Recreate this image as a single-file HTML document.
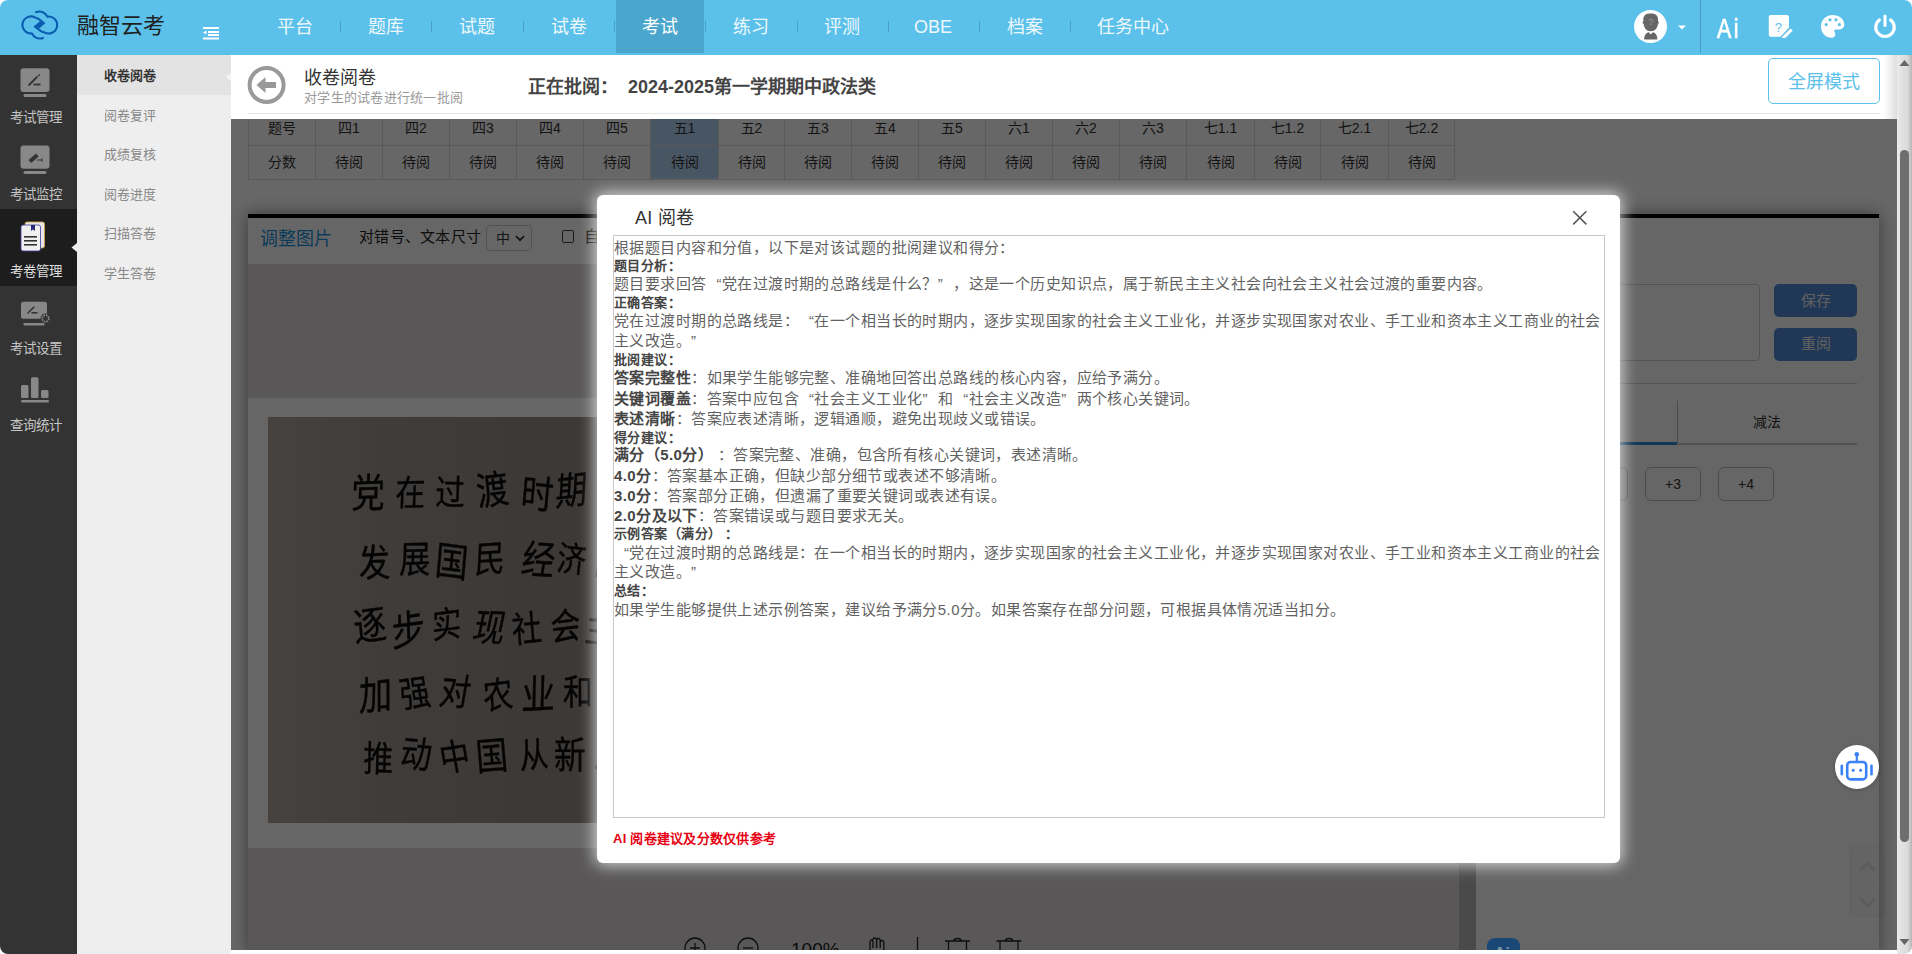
<!DOCTYPE html>
<html lang="zh-CN"><head><meta charset="utf-8">
<style>
*{box-sizing:border-box;margin:0;padding:0}
html,body{width:1912px;height:954px;overflow:hidden;background:#fff;font-family:"Liberation Sans",sans-serif}
.a{position:absolute}
#hdr{left:0;top:0;width:1912px;height:55px;background:#5bc1ea;border-top-left-radius:8px;border-top-right-radius:8px}
.nav{position:absolute;top:0;height:53px;line-height:54px;font-size:18px;color:#eef8fc;text-align:center;width:90px}
.sep{position:absolute;top:21px;width:1px;height:11px;background:#4a9fc6}
#side{left:0;top:55px;width:77px;height:899px;background:#333;border-bottom-left-radius:8px}
.si{position:absolute;left:-3px;width:77px;text-align:center;font-size:13.5px;color:#c4c4c4;margin-top:1px}
#sub{left:77px;top:55px;width:154px;height:899px;background:#eee}
.sub{position:absolute;left:27px;font-size:13px;color:#888;line-height:16px;margin-top:0.5px}
#overlay{left:231px;top:119px;width:1666px;height:831px;background:rgba(0,0,0,0.595)}
.td{position:absolute;border:1px solid #ddd;text-align:center;font-size:14px;line-height:33px;color:#333}
.hw{position:absolute;font-size:31px;line-height:40px;width:36px;text-align:center;color:#0a0a0a;white-space:nowrap;-webkit-text-stroke:0.3px #0a0a0a}
.md p{position:absolute;left:0;white-space:nowrap;font-size:15px;line-height:20px;color:#626262;letter-spacing:0.42px}
.md p.h{font-size:13px;line-height:19px;font-weight:bold;color:#444}
.md p b{color:#454545}
.md i{font-style:normal;display:inline-block;width:15.4px}
.md i.ql{text-align:right}
.md i.qr{text-align:left}
</style></head><body>
<div id="hdr" class="a">
 <svg class="a" style="left:0;top:0" width="80" height="55" viewBox="0 0 80 55">
  <g fill="none" stroke="#0a5cb0" stroke-width="2.1" stroke-linecap="round" stroke-linejoin="round">
   <path d="M36,12.2 C40.5,10.4 45.6,12.4 47.3,16.6 A8.5,8.5 0 1 1 44.3,32.3 C43,32.2 42,31.8 40.6,30.8 L35,26.6"/>
   <path d="M43,37.9 C38.5,39.6 33.6,37.6 31.9,33.4 A8.5,8.5 0 1 1 35.4,17.7 C36.7,17.8 37.8,18.3 39.2,19.3 L44,23.4"/>
  </g>
  <path d="M45.2,23.1 L39.4,21.6 L33.6,26.8 L39.6,28.2 Z" fill="#0a5cb0"/>
 </svg>
 <div class="a" style="left:77px;top:11px;font-size:22px;line-height:30px;color:#1f1f1f;letter-spacing:0px">融智云考</div>
 <svg class="a" style="left:203px;top:27px" width="16" height="13" viewBox="0 0 16 13">
  <rect x="0" y="0" width="16" height="2" fill="#fff"/>
  <rect x="5" y="4" width="11" height="2" fill="#fff"/>
  <rect x="5" y="7" width="11" height="2" fill="#fff"/>
  <rect x="0" y="10.5" width="16" height="2" fill="#fff"/>
  <path d="M0,5.5 L3.5,3.5 L3.5,7.5 Z" fill="#fff"/>
 </svg>
 <div class="a" style="left:616px;top:0;width:88px;height:53px;background:#4aa6cd"></div>
 <div class="nav" style="left:250px">平台</div>
 <div class="nav" style="left:341px">题库</div>
 <div class="nav" style="left:432px">试题</div>
 <div class="nav" style="left:524px">试卷</div>
 <div class="nav" style="left:615px;color:#fff">考试</div>
 <div class="nav" style="left:706px">练习</div>
 <div class="nav" style="left:797px">评测</div>
 <div class="nav" style="left:888px">OBE</div>
 <div class="nav" style="left:980px">档案</div>
 <div class="nav" style="left:1078px;width:110px">任务中心</div>
 <div class="sep" style="left:340px"></div>
 <div class="sep" style="left:431px"></div>
 <div class="sep" style="left:523px"></div>
 <div class="sep" style="left:614px"></div>
 <div class="sep" style="left:705px"></div>
 <div class="sep" style="left:797px"></div>
 <div class="sep" style="left:888px"></div>
 <div class="sep" style="left:979px"></div>
 <div class="sep" style="left:1070px"></div>
 <!-- avatar -->
 <div class="a" style="left:1634px;top:10px;width:33px;height:33px;border-radius:50%;background:#fff;overflow:hidden">
  <svg width="33" height="33" viewBox="0 0 33 33">
   <path d="M9.4,11 C8.8,5 12.2,3.6 16.6,3.6 C21,3.6 24.6,5 24,11 C25.2,11.6 25,13.8 23.9,14 C23.4,18.6 20.8,21.2 16.8,21.2 C12.6,21.2 10.2,18.6 9.7,14 C8.4,13.8 8.2,11.6 9.4,11 Z" fill="#666"/>
   <path d="M10.2,29.6 C10.2,25.2 12.2,22.8 14.8,22.3 L16.8,24.6 L18.8,22.3 C21.4,22.8 23.4,25.2 23.4,29.6 Z" fill="#666"/>
   <text x="16.8" y="14.5" font-size="9" fill="#9a9a9a" text-anchor="middle" font-family="Liberation Sans">?</text>
  </svg>
 </div>
 <svg class="a" style="left:1678px;top:25px" width="8" height="5" viewBox="0 0 8 5"><path d="M0,0.5 L8,0.5 L4,4.6 Z" fill="#fff"/></svg>
 <div class="a" style="left:1700px;top:0;width:1px;height:53px;background:#4a9cc2"></div>
 <div class="a" style="left:1717px;top:11.5px;font-size:27.5px;line-height:34px;color:#fff;-webkit-text-stroke:0.7px #fff;letter-spacing:3px;transform:scaleX(0.78);transform-origin:0 0">Ai</div>
 <svg class="a" style="left:1767px;top:13px" width="26" height="26" viewBox="0 0 26 26">
  <path d="M3.5,2 L20,2 Q22,2 22,4 L22,14.5 L13.5,23.8 L3.5,23.8 Q1.8,23.8 1.8,22 L1.8,3.7 Q1.8,2 3.5,2 Z" fill="#fff"/>
  <path d="M15.2,23.8 L23.6,15.4 L25.8,17.6 L18.4,25 L15.2,25 Z" fill="#fff"/>
  <text x="11.3" y="18.5" font-size="13" fill="#5bc1ea" text-anchor="middle" font-family="Liberation Sans">?</text>
 </svg>
 <svg class="a" style="left:1820px;top:14px" width="26" height="25" viewBox="0 0 26 25">
  <path d="M12.5,1 C19,1 24.3,5 24.3,10.5 C24.3,14 21.5,15.6 18.5,15.6 L15.8,15.6 C14.6,15.6 13.8,16.6 14.2,17.6 C14.6,18.4 15.3,19.2 15.3,20.6 C15.3,22.6 13.8,23.8 11.8,23.8 C5.6,23.6 1,19 1,12.4 C1,6 6,1 12.5,1 Z" fill="#fff"/>
  <circle cx="6.2" cy="10.6" r="1.6" fill="#5bc1ea"/>
  <circle cx="10" cy="5.8" r="1.6" fill="#5bc1ea"/>
  <circle cx="16" cy="5.8" r="1.6" fill="#5bc1ea"/>
  <circle cx="19.4" cy="10.6" r="1.6" fill="#5bc1ea"/>
 </svg>
 <svg class="a" style="left:1873px;top:14px" width="24" height="25" viewBox="0 0 24 25">
  <path d="M6.4,6 A9.2,9.2 0 1 0 17.6,6" fill="none" stroke="#fff" stroke-width="3.2" stroke-linecap="round"/>
  <path d="M12,2 L12,11.5" stroke="#fff" stroke-width="3" stroke-linecap="round"/>
 </svg>
</div>
<div id="side" class="a">
 <div class="a" style="left:0;top:154px;width:77px;height:77px;background:#1d1d1d"></div>
 <svg class="a" style="left:0;top:0" width="77" height="400" viewBox="0 55 77 400">
  <!-- icon1 -->
  <rect x="20.5" y="68.3" width="29" height="23.7" rx="3" fill="#888"/>
  <rect x="23.5" y="94" width="23" height="3" rx="1.5" fill="#888"/>
  <path d="M29,85 L37,77" stroke="#333" stroke-width="1.8" stroke-linecap="round"/>
  <rect x="33.5" y="83.6" width="7" height="1.8" fill="#333"/>
  <circle cx="39" cy="75.3" r="1" fill="#333"/>
  <!-- icon2 -->
  <rect x="20.5" y="145.6" width="29" height="23.1" rx="3" fill="#888"/>
  <rect x="23.5" y="171" width="23" height="3" rx="1.5" fill="#888"/>
  <path d="M28.5,160 L36,153.6 L38.6,156.6 L31.2,163 Z" fill="#333"/>
  <path d="M37,160 L42,160 M42,158 L42,162" stroke="#333" stroke-width="0.9"/>
  <!-- icon3 active docs -->
  <rect x="25" y="222" width="19.5" height="26" rx="2" fill="#e8e8e8" stroke="#d9a640" stroke-width="0.8"/>
  <rect x="21" y="225" width="19.5" height="26" rx="2" fill="#f0f0f0" stroke="#3a3aa0" stroke-width="0.8"/>
  <path d="M31,225 L31,231 L33,229.5 L35,231 L35,225 Z" fill="#2a2a7a"/>
  <rect x="24" y="236" width="13" height="1.6" fill="#333"/>
  <rect x="24" y="240" width="13" height="1.6" fill="#333"/>
  <rect x="24" y="244" width="13" height="1.6" fill="#333"/>
  <!-- icon4 -->
  <rect x="21" y="301.7" width="26" height="17" rx="2.5" fill="#888"/>
  <rect x="23.5" y="323" width="21" height="2.5" rx="1.2" fill="#888"/>
  <path d="M28,313 L34,307" stroke="#333" stroke-width="1.6" stroke-linecap="round"/>
  <rect x="31.5" y="312" width="6" height="1.6" fill="#333"/>
  <circle cx="45.5" cy="318.5" r="5" fill="#333"/>
  <circle cx="45.5" cy="318.5" r="3.3" fill="none" stroke="#888" stroke-width="1.8" stroke-dasharray="1.6 1"/>
  <circle cx="45.5" cy="318.5" r="1" fill="#333"/>
  <!-- icon5 bars -->
  <rect x="21" y="385" width="7.5" height="13" rx="1.5" fill="#888"/>
  <rect x="31" y="377.2" width="7.5" height="20.8" rx="1.5" fill="#888"/>
  <rect x="41" y="390" width="7.5" height="8" rx="1.5" fill="#888"/>
  <rect x="21" y="400" width="28" height="2.5" rx="1.2" fill="#888"/>
  <!-- pointer -->
  <path d="M77,243 L71.5,247.5 L77,252 Z" fill="#eee"/>
 </svg>
 <div class="si" style="top:54px;line-height:16px">考试管理</div>
 <div class="si" style="top:131px;line-height:16px">考试监控</div>
 <div class="si" style="top:208px;line-height:16px;color:#ddd">考卷管理</div>
 <div class="si" style="top:285px;line-height:16px">考试设置</div>
 <div class="si" style="top:362px;line-height:16px">查询统计</div>
</div>
<div id="sub" class="a">
 <div class="a" style="left:0;top:0;width:154px;height:40px;background:#e3e3e3"></div>
 <svg class="a" style="left:148px;top:17px" width="6" height="10" viewBox="0 0 6 10"><path d="M6,0.5 L1,5 L6,9.5 Z" fill="#f4f4f4"/></svg>
 <div class="sub" style="top:12px;color:#333;font-weight:bold">收卷阅卷</div>
 <div class="sub" style="top:52px">阅卷复评</div>
 <div class="sub" style="top:91px">成绩复核</div>
 <div class="sub" style="top:131px">阅卷进度</div>
 <div class="sub" style="top:170px">扫描答卷</div>
 <div class="sub" style="top:210px">学生答卷</div>
</div>
<!-- page header -->
<svg class="a" style="left:246px;top:64px" width="42" height="42" viewBox="0 0 42 42">
 <circle cx="20.6" cy="21" r="17" fill="none" stroke="#999" stroke-width="4"/>
 <path d="M10.5,21 L19.5,13 L19.5,18 L30,18 L30,24 L19.5,24 L19.5,29 Z" fill="#999"/>
</svg>
<div class="a" style="left:304px;top:65.5px;font-size:18px;line-height:24px;color:#333">收卷阅卷</div>
<div class="a" style="left:304px;top:90px;font-size:13px;line-height:16px;color:#999;letter-spacing:0.25px">对学生的试卷进行统一批阅</div>
<div class="a" style="left:528px;top:75px;font-size:18px;line-height:24px;color:#444;font-weight:bold;white-space:pre">正在批阅：  2024-2025第一学期期中政法类</div>
<div class="a" style="left:1768px;top:58px;width:112px;height:46px;border:1px solid #5bc1ea;border-radius:5px;color:#5bc1ea;font-size:18px;line-height:47px;text-align:center">全屏模式</div>
<div class="a" style="left:248px;top:113px;width:1632px;height:1px;background:#e6e6e6"></div>
<!-- scrollbar -->
<div class="a" style="left:1897px;top:55px;width:15px;height:899px;border-bottom-right-radius:8px;background:linear-gradient(to right,#ececec 0,#e4e4e4 20%,#dadada 70%,#b6b6b6 100%)"></div>
<div class="a" style="left:1884px;top:55px;width:13px;height:64px;background:linear-gradient(to right,rgba(255,255,255,0),rgba(200,200,200,0.6))"></div>
<svg class="a" style="left:1899px;top:59px" width="11" height="8" viewBox="0 0 11 8"><path d="M0.5,7 L5.5,1 L10.5,7 Z" fill="#666"/></svg>
<svg class="a" style="left:1899px;top:938px" width="11" height="8" viewBox="0 0 11 8"><path d="M0.5,1 L5.5,7 L10.5,1 Z" fill="#666"/></svg>
<div class="a" style="left:1900px;top:150px;width:9px;height:692px;border-radius:5px;background:#6e6e6e"></div>

<!-- content under overlay -->
<div class="a" style="left:231px;top:119px;width:1666px;height:831px;background:#fff;overflow:hidden">
 <!-- table -->
 <div class="a" style="left:17px;top:-8px;width:1207px;height:69px;background:#fff"></div>
 <div class="td" style="left:17px;top:-8px;width:68px;height:35px;background:#fff">题号</div>
<div class="td" style="left:17px;top:26px;width:68px;height:35px;background:#fff">分数</div>
<div class="td" style="left:84px;top:-8px;width:68px;height:35px;background:#fff">四1</div>
<div class="td" style="left:84px;top:26px;width:68px;height:35px;background:#fff">待阅</div>
<div class="td" style="left:151px;top:-8px;width:68px;height:35px;background:#fff">四2</div>
<div class="td" style="left:151px;top:26px;width:68px;height:35px;background:#fff">待阅</div>
<div class="td" style="left:218px;top:-8px;width:68px;height:35px;background:#fff">四3</div>
<div class="td" style="left:218px;top:26px;width:68px;height:35px;background:#fff">待阅</div>
<div class="td" style="left:285px;top:-8px;width:68px;height:35px;background:#fff">四4</div>
<div class="td" style="left:285px;top:26px;width:68px;height:35px;background:#fff">待阅</div>
<div class="td" style="left:352px;top:-8px;width:68px;height:35px;background:#fff">四5</div>
<div class="td" style="left:352px;top:26px;width:68px;height:35px;background:#fff">待阅</div>
<div class="td" style="left:419px;top:-8px;width:69px;height:35px;background:#b3d2f5">五1</div>
<div class="td" style="left:419px;top:26px;width:69px;height:35px;background:#b3d2f5">待阅</div>
<div class="td" style="left:487px;top:-8px;width:67px;height:35px;background:#fff">五2</div>
<div class="td" style="left:487px;top:26px;width:67px;height:35px;background:#fff">待阅</div>
<div class="td" style="left:553px;top:-8px;width:68px;height:35px;background:#fff">五3</div>
<div class="td" style="left:553px;top:26px;width:68px;height:35px;background:#fff">待阅</div>
<div class="td" style="left:620px;top:-8px;width:68px;height:35px;background:#fff">五4</div>
<div class="td" style="left:620px;top:26px;width:68px;height:35px;background:#fff">待阅</div>
<div class="td" style="left:687px;top:-8px;width:68px;height:35px;background:#fff">五5</div>
<div class="td" style="left:687px;top:26px;width:68px;height:35px;background:#fff">待阅</div>
<div class="td" style="left:754px;top:-8px;width:68px;height:35px;background:#fff">六1</div>
<div class="td" style="left:754px;top:26px;width:68px;height:35px;background:#fff">待阅</div>
<div class="td" style="left:821px;top:-8px;width:68px;height:35px;background:#fff">六2</div>
<div class="td" style="left:821px;top:26px;width:68px;height:35px;background:#fff">待阅</div>
<div class="td" style="left:888px;top:-8px;width:68px;height:35px;background:#fff">六3</div>
<div class="td" style="left:888px;top:26px;width:68px;height:35px;background:#fff">待阅</div>
<div class="td" style="left:955px;top:-8px;width:69px;height:35px;background:#fff">七1.1</div>
<div class="td" style="left:955px;top:26px;width:69px;height:35px;background:#fff">待阅</div>
<div class="td" style="left:1023px;top:-8px;width:67px;height:35px;background:#fff">七1.2</div>
<div class="td" style="left:1023px;top:26px;width:67px;height:35px;background:#fff">待阅</div>
<div class="td" style="left:1089px;top:-8px;width:69px;height:35px;background:#fff">七2.1</div>
<div class="td" style="left:1089px;top:26px;width:69px;height:35px;background:#fff">待阅</div>
<div class="td" style="left:1157px;top:-8px;width:67px;height:35px;background:#fff">七2.2</div>
<div class="td" style="left:1157px;top:26px;width:67px;height:35px;background:#fff">待阅</div>
 <!-- lower region bg -->
 
 
 <!-- panel black bar -->
 <div class="a" style="left:17px;top:95px;width:1631px;height:740px;background:#fff;box-shadow:0 0 16px rgba(0,0,0,0.45)"></div>
 <div class="a" style="left:17px;top:95px;width:1631px;height:4px;background:#000"></div>
 <!-- viewer -->
 <div class="a" style="left:17px;top:99px;width:1211px;height:732px;background:#dcd7d7"></div>
 <div class="a" style="left:17px;top:99px;width:1211px;height:46px;background:#fdfdfd"></div>
 <div class="a" style="left:29px;top:107px;font-size:18px;line-height:26px;color:#1e92dc">调整图片</div>
 <div class="a" style="left:128px;top:107px;font-size:15px;line-height:22px;color:#222;letter-spacing:0.3px">对错号、文本尺寸</div>
 <div class="a" style="left:255px;top:106px;width:46px;height:26px;border:1px solid #ccc;border-radius:4px;font-size:14px;line-height:24px;color:#333;padding-left:9px">中</div>
 <svg class="a" style="left:284px;top:116px" width="10" height="7" viewBox="0 0 10 7"><path d="M1,1.2 L5,5.2 L9,1.2" fill="none" stroke="#333" stroke-width="1.8"/></svg>
 <div class="a" style="left:331px;top:111px;width:12px;height:13px;border:1px solid #444;border-radius:2px"></div>
 <div class="a" style="left:353px;top:106px;font-size:16px;line-height:24px;color:#222">自动</div>
 <!-- image container -->
 <div class="a" style="left:17px;top:279px;width:1211px;height:450px;background:#fdfdfd"></div>
 <div class="a" style="left:37px;top:298px;width:1170px;height:406px;background:linear-gradient(to right,#aba49f 0,#9d9691 110px,#958e89 260px,#938c87 100%);overflow:hidden;filter:blur(0.45px)">
  <div class="hw" style="left:82px;top:56.8px;font-size:33.6px;transform:rotate(-1.8deg) skewX(-3.3deg) scaleY(1.2)">党</div>
  <div class="hw" style="left:124px;top:57.1px;font-size:29.9px;transform:rotate(-0.9deg) skewX(-3.0deg) scaleY(1.2)">在</div>
  <div class="hw" style="left:164px;top:55.8px;font-size:29.5px;transform:rotate(1.1deg) skewX(-0.5deg) scaleY(1.2)">过</div>
  <div class="hw" style="left:207px;top:54.3px;font-size:32.5px;transform:rotate(-7.5deg) skewX(-0.3deg) scaleY(1.2)">渡</div>
  <div class="hw" style="left:251px;top:57.7px;font-size:32.3px;transform:rotate(6.7deg) skewX(1.6deg) scaleY(1.2)">时</div>
  <div class="hw" style="left:286px;top:54.4px;font-size:31.6px;transform:rotate(-6.5deg) skewX(-9.8deg) scaleY(1.2)">期</div>
  <div class="hw" style="left:326px;top:56.8px;font-size:29.2px;transform:rotate(-6.0deg) skewX(-7.1deg) scaleY(1.2)">的</div>
  <div class="hw" style="left:89px;top:125.8px;font-size:31.6px;transform:rotate(-2.0deg) skewX(0.1deg) scaleY(1.2)">发</div>
  <div class="hw" style="left:129px;top:123.7px;font-size:31.3px;transform:rotate(-1.0deg) skewX(-2.1deg) scaleY(1.2)">展</div>
  <div class="hw" style="left:166px;top:126.2px;font-size:33.2px;transform:rotate(7.0deg) skewX(1.9deg) scaleY(1.2)">国</div>
  <div class="hw" style="left:204px;top:122.4px;font-size:30.4px;transform:rotate(-4.0deg) skewX(-7.2deg) scaleY(1.2)">民</div>
  <div class="hw" style="left:252px;top:124.3px;font-size:33.2px;transform:rotate(3.3deg) skewX(-5.2deg) scaleY(1.2)">经</div>
  <div class="hw" style="left:286px;top:123.3px;font-size:29.0px;transform:rotate(6.3deg) skewX(0.2deg) scaleY(1.2)">济</div>
  <div class="hw" style="left:326px;top:124.4px;font-size:33.9px;transform:rotate(5.6deg) skewX(-4.4deg) scaleY(1.2)">的</div>
  <div class="hw" style="left:84px;top:189.6px;font-size:32.9px;transform:rotate(-7.8deg) skewX(-2.4deg) scaleY(1.2)">逐</div>
  <div class="hw" style="left:122px;top:192.5px;font-size:33.8px;transform:rotate(-7.6deg) skewX(-6.0deg) scaleY(1.2)">步</div>
  <div class="hw" style="left:161px;top:188.4px;font-size:29.5px;transform:rotate(-7.1deg) skewX(-7.0deg) scaleY(1.2)">实</div>
  <div class="hw" style="left:204px;top:190.7px;font-size:31.8px;transform:rotate(3.8deg) skewX(-7.9deg) scaleY(1.2)">现</div>
  <div class="hw" style="left:241px;top:191.9px;font-size:29.7px;transform:rotate(-5.9deg) skewX(-1.2deg) scaleY(1.2)">社</div>
  <div class="hw" style="left:279px;top:189.6px;font-size:30.1px;transform:rotate(-7.1deg) skewX(-5.0deg) scaleY(1.2)">会</div>
  <div class="hw" style="left:314px;top:193.3px;font-size:30.5px;transform:rotate(6.5deg) skewX(-0.4deg) scaleY(1.2)">主</div>
  <div class="hw" style="left:89px;top:258.9px;font-size:33.3px;transform:rotate(-5.6deg) skewX(-5.3deg) scaleY(1.2)">加</div>
  <div class="hw" style="left:129px;top:256.5px;font-size:30.1px;transform:rotate(-7.4deg) skewX(1.9deg) scaleY(1.2)">强</div>
  <div class="hw" style="left:169px;top:255.4px;font-size:30.5px;transform:rotate(3.4deg) skewX(-6.1deg) scaleY(1.2)">对</div>
  <div class="hw" style="left:212px;top:258.6px;font-size:30.2px;transform:rotate(-7.6deg) skewX(-3.0deg) scaleY(1.2)">农</div>
  <div class="hw" style="left:252px;top:257.9px;font-size:33.8px;transform:rotate(-3.1deg) skewX(-4.6deg) scaleY(1.2)">业</div>
  <div class="hw" style="left:292px;top:255.9px;font-size:29.9px;transform:rotate(0.2deg) skewX(0.4deg) scaleY(1.2)">和</div>
  <div class="hw" style="left:332px;top:256.1px;font-size:30.2px;transform:rotate(5.5deg) skewX(-0.2deg) scaleY(1.2)">手</div>
  <div class="hw" style="left:92px;top:322.7px;font-size:30.0px;transform:rotate(2.8deg) skewX(1.3deg) scaleY(1.2)">推</div>
  <div class="hw" style="left:130px;top:317.6px;font-size:31.1px;transform:rotate(5.1deg) skewX(-2.8deg) scaleY(1.2)">动</div>
  <div class="hw" style="left:169px;top:321.2px;font-size:30.2px;transform:rotate(-8.4deg) skewX(1.6deg) scaleY(1.2)">中</div>
  <div class="hw" style="left:206px;top:318.8px;font-size:32.0px;transform:rotate(-4.9deg) skewX(-0.1deg) scaleY(1.2)">国</div>
  <div class="hw" style="left:247px;top:318.4px;font-size:29.3px;transform:rotate(-6.2deg) skewX(-1.4deg) scaleY(1.2)">从</div>
  <div class="hw" style="left:284px;top:318.7px;font-size:32.1px;transform:rotate(-0.1deg) skewX(0.2deg) scaleY(1.2)">新</div>
  <div class="hw" style="left:324px;top:318.6px;font-size:29.1px;transform:rotate(5.7deg) skewX(-7.6deg) scaleY(1.2)">民</div>
 </div>
 <!-- splitter -->
 <div class="a" style="left:1228px;top:99px;width:17px;height:732px;background:#b8b8b8"></div>
 <!-- right panel -->
 <div class="a" style="left:1245px;top:99px;width:403px;height:732px;background:#fdfdfd"></div>
 <div class="a" style="left:1320px;top:165px;width:209px;height:77px;border:1px solid #ccc;border-radius:4px"></div>
 <div class="a" style="left:1543px;top:165px;width:83px;height:33px;border-radius:5px;background:#5288d6;color:#eee;font-size:15px;line-height:33px;text-align:center">保存</div>
 <div class="a" style="left:1543px;top:209px;width:83px;height:33px;border-radius:5px;background:#5288d6;color:#eee;font-size:15px;line-height:32px;text-align:center">重阅</div>
 <div class="a" style="left:1260px;top:264px;width:366px;height:1px;background:#ccc"></div>
 <div class="a" style="left:1446px;top:282px;width:1px;height:43px;background:#bbb"></div>
 <div class="a" style="left:1260px;top:324px;width:366px;height:2px;background:#ccc"></div>
 <div class="a" style="left:1260px;top:323px;width:186px;height:3px;background:#2a86d4"></div>
 <div class="a" style="left:1522px;top:293px;font-size:14px;line-height:20px;color:#333">减法</div>
 <div class="a" style="left:1341px;top:348px;width:56px;height:34px;border:1px solid #bbb;border-radius:6px;font-size:14px;line-height:32px;text-align:center;color:#333">+2</div>
 <div class="a" style="left:1414px;top:348px;width:56px;height:34px;border:1px solid #bbb;border-radius:6px;font-size:14px;line-height:32px;text-align:center;color:#333">+3</div>
 <div class="a" style="left:1487px;top:348px;width:56px;height:34px;border:1px solid #bbb;border-radius:6px;font-size:14px;line-height:32px;text-align:center;color:#333">+4</div>
 
 <!-- bottom toolbar icons -->
 <svg class="a" style="left:440px;top:815px" width="600" height="20" viewBox="0 0 600 20">
  <g fill="none" stroke="#222" stroke-width="1.3">
   <circle cx="24" cy="14" r="10"/><path d="M24,9 L24,19 M19,14 L29,14"/>
   <circle cx="77" cy="14" r="10"/><path d="M72,14 L82,14"/>
   <path d="M246.5,3 L246.5,20"/>
   <path d="M274,7 L299,7 M282.5,7 Q283,4.5 286.5,4.5 Q290,4.5 290.5,7 M277.5,7 L277.5,20 M295.5,7 L295.5,20"/>
   <path d="M325.5,7 L350.5,7 M334,7 Q334.5,4.5 338,4.5 Q341.5,4.5 342,7 M329,7 L329,20 M347,7 L347,20"/>
   <path d="M196,20 L199,15 L199,8 Q199,6 200.5,6 Q202,6 202,8 L202,14 M202,6 Q202,4 203.8,4 Q205.6,4 205.6,6 L205.6,14 M205.6,6 Q205.6,4.5 207.4,4.5 Q209.2,4.5 209.2,6.5 L209.2,14 M209.2,8 Q209.2,6.5 211,6.5 Q212.8,6.5 212.8,8.5 L212.8,20"/>
  </g>
  <g fill="#222"><circle cx="283" cy="17.5" r="0.9"/><circle cx="286.5" cy="17.5" r="0.9"/><circle cx="290" cy="17.5" r="0.9"/>
  <circle cx="334.5" cy="17.5" r="0.9"/><circle cx="338" cy="17.5" r="0.9"/><circle cx="341.5" cy="17.5" r="0.9"/></g>
  <text x="120" y="21.5" font-size="19" fill="#222" font-family="Liberation Sans">100%</text>
 </svg>
</div>
<div id="overlay" class="a"></div>
<div class="a" style="left:597px;top:195px;width:1023px;height:668px;background:#fff;border-radius:6px;box-shadow:0 0 16px 2px rgba(255,255,255,0.77)">
 <div class="a" style="left:38px;top:10px;font-size:18px;line-height:26px;color:#333;letter-spacing:0.3px">AI 阅卷</div>
 <svg class="a" style="left:975px;top:15px" width="16" height="16" viewBox="0 0 16 16"><path d="M1.2,1.2 L14.4,14.4 M14.4,1.2 L1.2,14.4" stroke="#555" stroke-width="1.5"/></svg>
 <div class="a" style="left:16px;top:40px;width:992px;height:583px;border:1px solid #c8c8c8"></div>
 <div class="a md" style="left:17px;top:41px;width:990px">
<p style="top:2.0px">根据题目内容和分值，以下是对该试题的批阅建议和得分：</p>
<p class="h" style="top:19.7px">题目分析：</p>
<p style="top:38.1px">题目要求回答<i class="ql">“</i>党在过渡时期的总路线是什么？<i class="qr">”</i>，这是一个历史知识点，属于新民主主义社会向社会主义社会过渡的重要内容。</p>
<p class="h" style="top:57.1px">正确答案：</p>
<p style="top:75.0px">党在过渡时期的总路线是：<i class="ql">“</i>在一个相当长的时期内，逐步实现国家的社会主义工业化，并逐步实现国家对农业、手工业和资本主义工商业的社会</p>
<p style="top:94.9px">主义改造。<i class="qr">”</i></p>
<p class="h" style="top:113.6px">批阅建议：</p>
<p style="top:132.0px"><b>答案完整性</b>：如果学生能够完整、准确地回答出总路线的核心内容，应给予满分。</p>
<p style="top:152.7px"><b>关键词覆盖</b>：答案中应包含<i class="ql">“</i>社会主义工业化<i class="qr">”</i>和<i class="ql">“</i>社会主义改造<i class="qr">”</i>两个核心关键词。</p>
<p style="top:172.6px"><b>表述清晰</b>：答案应表述清晰，逻辑通顺，避免出现歧义或错误。</p>
<p class="h" style="top:191.5px">得分建议：</p>
<p style="top:209.4px"><b>满分（5.0分）</b> ：答案完整、准确，包含所有核心关键词，表述清晰。</p>
<p style="top:229.6px"><b>4.0分</b>：答案基本正确，但缺少部分细节或表述不够清晰。</p>
<p style="top:249.6px"><b>3.0分</b>：答案部分正确，但遗漏了重要关键词或表述有误。</p>
<p style="top:269.7px"><b>2.0分及以下</b>：答案错误或与题目要求无关。</p>
<p class="h" style="top:288.0px">示例答案（满分） ：</p>
<p style="top:307.0px"><i class="ql">“</i>党在过渡时期的总路线是：在一个相当长的时期内，逐步实现国家的社会主义工业化，并逐步实现国家对农业、手工业和资本主义工商业的社会</p>
<p style="top:325.8px">主义改造。<i class="qr">”</i></p>
<p class="h" style="top:344.6px">总结：</p>
<p style="top:363.5px">如果学生能够提供上述示例答案，建议给予满分5.0分。如果答案存在部分问题，可根据具体情况适当扣分。</p> </div>
 <div class="a" style="left:16px;top:635px;font-size:13px;line-height:18px;color:#e60012;font-weight:bold;letter-spacing:0.25px">AI 阅卷建议及分数仅供参考</div>
</div>
<!-- robot -->
<div class="a" style="left:1835px;top:745px;width:44px;height:44px;border-radius:50%;background:#fff;box-shadow:0 1px 4px rgba(0,0,0,0.2)">
 <svg class="a" style="left:0;top:0" width="44" height="44" viewBox="0 0 44 44">
  <circle cx="21.8" cy="9.3" r="2.3" fill="#3b82f6"/>
  <path d="M21.8,10 L21.8,16.5" stroke="#3b82f6" stroke-width="2.2"/>
  <rect x="12.2" y="17" width="19" height="17.4" rx="3.5" fill="none" stroke="#3b82f6" stroke-width="2.6"/>
  <circle cx="18.2" cy="25.3" r="1.5" fill="#3b82f6"/><circle cx="25.6" cy="25.3" r="1.5" fill="#3b82f6"/>
  <rect x="5.5" y="19.5" width="2.6" height="11" rx="1.3" fill="#3b82f6"/>
  <rect x="35.2" y="19.5" width="2.6" height="11" rx="1.3" fill="#3b82f6"/>
 </svg>
</div>
<!-- scroll up/down widget -->
<div class="a" style="left:1850px;top:846px;width:35px;height:71px;border-radius:4px;background:rgba(0,0,0,0.015);border:1px solid rgba(0,0,0,0.03)"></div>
<svg class="a" style="left:1850px;top:846px" width="35" height="71" viewBox="0 0 35 71">
 <path d="M10,24.5 L17.5,17.5 L25,24.5 M10,52.5 L17.5,59.5 L25,52.5" fill="none" stroke="#5c5c5c" stroke-width="2.4"/>
 <path d="M1,35.5 L34,35.5" stroke="#606060" stroke-width="0.7" stroke-dasharray="2 2"/>
</svg>
<div class="a" style="left:231px;top:950px;width:1666px;height:4px;background:#fff"></div>
<div class="a" style="left:1487px;top:938px;width:33px;height:12px;border-radius:8px 8px 0 0;background:#194877;overflow:hidden"><div class="a" style="left:7px;top:6px;font-size:16px;line-height:20px;font-weight:bold;color:#7f93a8;">Ai</div></div>

</body></html>
